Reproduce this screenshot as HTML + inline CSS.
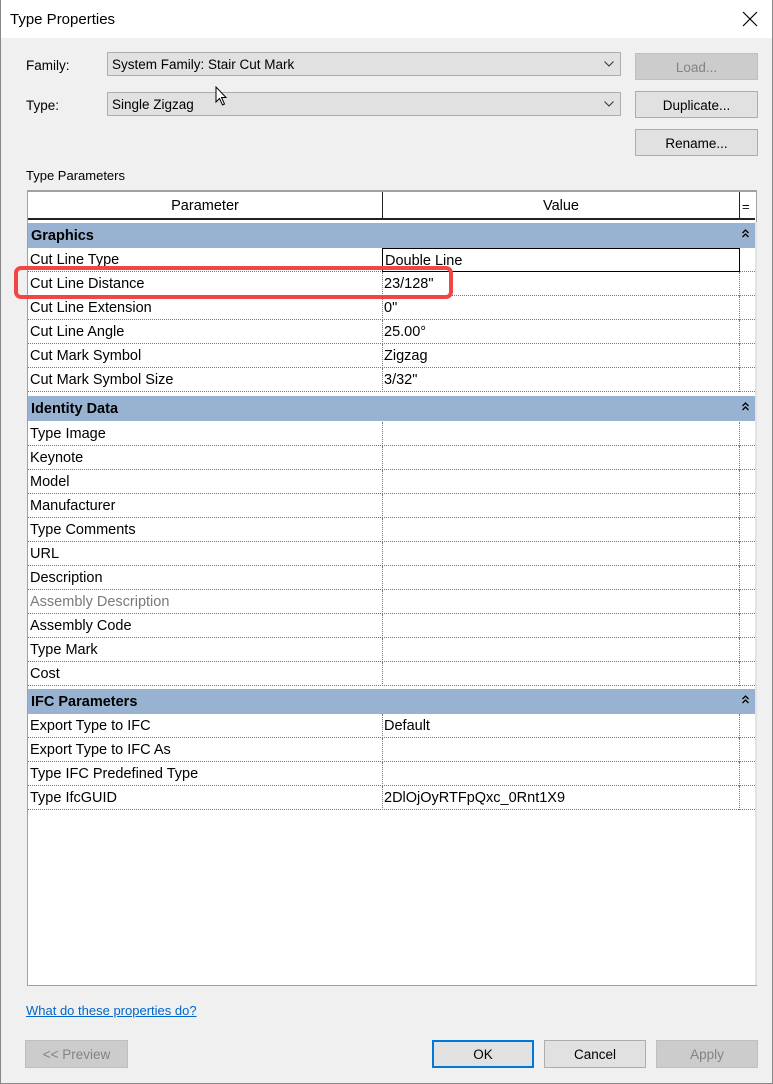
<!DOCTYPE html>
<html><head><meta charset="utf-8"><style>
*{margin:0;padding:0;box-sizing:border-box}
body{width:773px;height:1084px;background:#f0f0f0;font-family:"Liberation Sans",sans-serif;font-size:14px;color:#000;position:relative;overflow:hidden}
.a{position:absolute}
.win{position:absolute;left:0;top:0;width:773px;height:1084px;border:1px solid #888;border-top:none}
.title{left:1px;top:0;width:771px;height:38px;background:#fff}
.dd{background:#e1e1e1;border:1px solid #adadad;height:24px;padding:4px 4px;font-size:13.5px}
.btn{background:#e1e1e1;border:1px solid #adadad;text-align:center;font-size:13.5px;line-height:27px}
.dis{background:#cccccc;border-color:#bfbfbf;color:#838383}
.row{position:absolute;left:28px;width:727px;height:24px;background:#fff;border-bottom:1px dotted #777}
.row span{position:absolute;top:4px;font-size:14.5px}
.row .c1{left:2px}.row .c2{left:356px}
.row i{position:absolute;top:0;height:24px;border-left:1px dotted #777}
.band{position:absolute;left:28px;width:727px;height:25px;background:#98b3d1;font-weight:bold;font-size:14.5px;padding:5px 3px}
.band svg{position:absolute;right:6px;top:6px}
</style></head><body>
<div class="win"></div>
<div class="a title"></div>
<div class="a" style="left:10px;top:11px;font-size:15px">Type Properties</div>
<svg class="a" style="left:742px;top:11px" width="16" height="16"><path d="M1 1L15 15M15 1L1 15" stroke="#000" stroke-width="1.2"/></svg>

<div class="a" style="left:26px;top:58px;font-size:13.5px">Family:</div>
<div class="a" style="left:26px;top:98px;font-size:13.5px">Type:</div>
<div class="a dd" style="left:107px;top:52px;width:514px">System Family: Stair Cut Mark</div>
<div class="a dd" style="left:107px;top:92px;width:514px">Single Zigzag</div>
<svg class="a" style="left:604px;top:60px" width="10" height="8"><path d="M0.5 1.5L5 6L9.5 1.5" fill="none" stroke="#333"/></svg>
<svg class="a" style="left:604px;top:100px" width="10" height="8"><path d="M0.5 1.5L5 6L9.5 1.5" fill="none" stroke="#333"/></svg>
<svg class="a" style="left:215px;top:86px" width="14" height="22"><path d="M1 1L1 16L4.5 12.5L7.5 19L9.5 18L6.5 11.5L11 11.5Z" fill="#fff" stroke="#000"/></svg>
<div class="a btn dis" style="left:635px;top:53px;width:123px;height:27px">Load...</div>
<div class="a btn" style="left:635px;top:91px;width:123px;height:27px">Duplicate...</div>
<div class="a btn" style="left:635px;top:129px;width:123px;height:27px">Rename...</div>

<div class="a" style="left:26px;top:168px;font-size:13px">Type Parameters</div>

<div class="a" style="left:27px;top:190px;width:730px;height:796px;background:#fff;border:1px solid #a0a0a0;border-top:2px solid #a0a0a0"></div>
<div class="a" style="left:755px;top:222px;width:2px;height:763px;background:#e3e3e3"></div>
<div class="a" style="left:28px;top:192px;width:727px;height:28px;background:#fff;border-bottom:2px solid #222"></div>
<div class="a" style="left:382px;top:192px;width:1px;height:27px;background:#222"></div>
<div class="a" style="left:739px;top:192px;width:1px;height:27px;background:#222"></div>
<div class="a" style="left:28px;top:198px;width:354px;text-align:center;font-size:14.5px">Parameter</div>
<div class="a" style="left:383px;top:198px;width:356px;text-align:center;font-size:14.5px">Value</div>
<div class="a" style="left:742px;top:199px;font-size:13px">=</div>

<div class="band" style="top:223px">Graphics<svg width="7" height="9"><path d="M0.5 4L3.5 1L6.5 4M0.5 8L3.5 5L6.5 8" fill="none" stroke="#000" stroke-width="1.3"/></svg></div>
<div class="row" style="top:248px"><span class="c1">Cut Line Type</span><i style="left:354px"></i><i style="left:711px"></i></div>
<div class="a" style="left:382px;top:248px;width:358px;height:24px;border:1px solid #000;background:#fff;padding:4px 2px;font-size:14.5px">Double Line</div>
<div class="row" style="top:272px"><span class="c1">Cut Line Distance</span><span class="c2">23/128"</span><i style="left:354px"></i><i style="left:711px"></i></div>
<div class="row" style="top:296px"><span class="c1">Cut Line Extension</span><span class="c2">0"</span><i style="left:354px"></i><i style="left:711px"></i></div>
<div class="row" style="top:320px"><span class="c1">Cut Line Angle</span><span class="c2">25.00°</span><i style="left:354px"></i><i style="left:711px"></i></div>
<div class="row" style="top:344px"><span class="c1">Cut Mark Symbol</span><span class="c2">Zigzag</span><i style="left:354px"></i><i style="left:711px"></i></div>
<div class="row" style="top:368px"><span class="c1">Cut Mark Symbol Size</span><span class="c2">3/32"</span><i style="left:354px"></i><i style="left:711px"></i></div>

<div class="band" style="top:396px">Identity Data<svg width="7" height="9"><path d="M0.5 4L3.5 1L6.5 4M0.5 8L3.5 5L6.5 8" fill="none" stroke="#000" stroke-width="1.3"/></svg></div>
<div class="row" style="top:422px"><span class="c1">Type Image</span><i style="left:354px"></i><i style="left:711px"></i></div>
<div class="row" style="top:446px"><span class="c1">Keynote</span><i style="left:354px"></i><i style="left:711px"></i></div>
<div class="row" style="top:470px"><span class="c1">Model</span><i style="left:354px"></i><i style="left:711px"></i></div>
<div class="row" style="top:494px"><span class="c1">Manufacturer</span><i style="left:354px"></i><i style="left:711px"></i></div>
<div class="row" style="top:518px"><span class="c1">Type Comments</span><i style="left:354px"></i><i style="left:711px"></i></div>
<div class="row" style="top:542px"><span class="c1">URL</span><i style="left:354px"></i><i style="left:711px"></i></div>
<div class="row" style="top:566px"><span class="c1">Description</span><i style="left:354px"></i><i style="left:711px"></i></div>
<div class="row" style="top:590px"><span class="c1" style="color:#7a7a7a">Assembly Description</span><i style="left:354px"></i><i style="left:711px"></i></div>
<div class="row" style="top:614px"><span class="c1">Assembly Code</span><i style="left:354px"></i><i style="left:711px"></i></div>
<div class="row" style="top:638px"><span class="c1">Type Mark</span><i style="left:354px"></i><i style="left:711px"></i></div>
<div class="row" style="top:662px"><span class="c1">Cost</span><i style="left:354px"></i><i style="left:711px"></i></div>

<div class="band" style="top:689px">IFC Parameters<svg width="7" height="9"><path d="M0.5 4L3.5 1L6.5 4M0.5 8L3.5 5L6.5 8" fill="none" stroke="#000" stroke-width="1.3"/></svg></div>
<div class="row" style="top:714px"><span class="c1">Export Type to IFC</span><span class="c2">Default</span><i style="left:354px"></i><i style="left:711px"></i></div>
<div class="row" style="top:738px"><span class="c1">Export Type to IFC As</span><i style="left:354px"></i><i style="left:711px"></i></div>
<div class="row" style="top:762px"><span class="c1">Type IFC Predefined Type</span><i style="left:354px"></i><i style="left:711px"></i></div>
<div class="row" style="top:786px"><span class="c1">Type IfcGUID</span><span class="c2">2DlOjOyRTFpQxc_0Rnt1X9</span><i style="left:354px"></i><i style="left:711px"></i></div>

<div class="a" style="left:14px;top:266px;width:439px;height:33px;border:4px solid #f04646;border-radius:7px"></div>

<div class="a" style="left:26px;top:1003px;font-size:13px;color:#0066cc;text-decoration:underline">What do these properties do?</div>

<div class="a btn dis" style="left:25px;top:1040px;width:103px;height:28px">&lt;&lt; Preview</div>
<div class="a btn" style="left:432px;top:1040px;width:102px;height:28px;border:2px solid #0078d7;line-height:25px">OK</div>
<div class="a btn" style="left:544px;top:1040px;width:102px;height:28px">Cancel</div>
<div class="a btn dis" style="left:656px;top:1040px;width:102px;height:28px">Apply</div>
</body></html>
